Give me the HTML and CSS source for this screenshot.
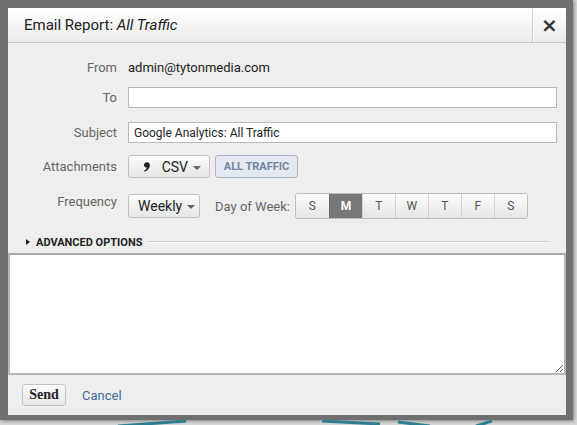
FILE: index.html
```html
<!DOCTYPE html>
<html lang="en">
<head>
    <meta charset="UTF-8">
    <meta name="viewport" content="width=device-width, initial-scale=1.0">
    <title>Email Report</title>
    <link rel="stylesheet" href="styles.css">
</head>
<body>

    <div class="dialog">
        <div class="title-bar">
            <h2 class="title">Email Report: <em>All Traffic</em></h2>
            <button class="close" type="button">&times;</button>
        </div>

        <form class="report-form">
            <div class="row row-from">
                <label>From</label>
                <span class="value">admin@tytonmedia.com</span>
            </div>
            <div class="row row-to">
                <label>To</label>
                <input type="text" class="field">
            </div>
            <div class="row row-subject">
                <label>Subject</label>
                <input type="text" class="field" value="Google Analytics: All Traffic">
            </div>
            <div class="row row-attach">
                <label>Attachments</label>
                <button type="button" class="btn btn-csv">
                    <svg class="comma" width="8" height="12" viewBox="0 0 8 12">
                        <path d="M4 1 C6.4 1 7.4 2.8 7.2 4.8 C6.9 7.6 4.6 9.8 1.6 11 L1 10 C2.8 8.9 3.8 7.8 4.1 6.6 C2.2 6.6 1 5.5 1 3.9 C1 2.2 2.3 1 4 1 Z" fill="#222"/>
                    </svg>
                    CSV <span class="caret"></span>
                </button>
                <button type="button" class="btn btn-tag">ALL TRAFFIC</button>
            </div>
            <div class="row row-freq">
                <label>Frequency</label>
                <button type="button" class="btn btn-weekly">Weekly <span class="caret"></span></button>
                <span class="dow-label">Day of Week:</span>
                <div class="days">
                    <button type="button" class="day">S</button>
                    <button type="button" class="day active">M</button>
                    <button type="button" class="day">T</button>
                    <button type="button" class="day">W</button>
                    <button type="button" class="day">T</button>
                    <button type="button" class="day">F</button>
                    <button type="button" class="day">S</button>
                </div>
            </div>
            <div class="advanced">
                <span class="arrow"></span>
                <span class="advanced-text">ADVANCED OPTIONS</span>
                <span class="rule"></span>
            </div>
            <textarea class="message"></textarea>
        </form>

        <div class="footer">
            <button type="button" class="btn btn-send">Send</button>
            <a href="#" class="cancel">Cancel</a>
        </div>
    </div>

    <svg class="chart" width="577" height="6" viewBox="0 0 577 6">
        <path d="M118 6 L186 1" stroke="#2f7f92" stroke-width="3" fill="none"/>
        <path d="M322 1 L380 4 M398 2 L430 6" stroke="#2f7f92" stroke-width="3" fill="none"/>
        <path d="M476 6 L492 1" stroke="#2f7f92" stroke-width="3" fill="none"/>
    </svg>

</body>
</html>
```

FILE: styles.css
```css
body {
    margin: 0;
    background-color: #d6d6d6;
    font-family: Roboto, "Liberation Sans", Arial, sans-serif;
    font-size: 13px;
    color: #222;
}
.dialog {
    width: 558px;
    background-color: #eeeeee;
    border-style: solid;
    border-color: #707070;
    border-width: 8px 7px 5px 8px;
    box-shadow: 1px 1px 3px rgba(0, 0, 0, 0.4);
}
.title-bar {
    display: flex;
    height: 34px;
    background: linear-gradient(#ffffff, #ececec);
    border-bottom: 1px solid #c9c9c9;
}
.title {
    flex: 1;
    margin: 0;
    padding-left: 16px;
    font-size: 15px;
    font-weight: normal;
    line-height: 34px;
    color: #222;
}
.close {
    width: 34px;
    border: none;
    border-left: 1px solid #d0d0d0;
    box-shadow: inset 1px 0 0 #fff;
    background: transparent;
    font-family: "DejaVu Sans", sans-serif;
    font-size: 20px;
    font-weight: bold;
    color: #333;
    padding: 0;
}
.report-form {
    padding-top: 14px;
}
.row {
    display: flex;
    align-items: center;
    padding-right: 9px;
}
.row label {
    width: 109px;
    margin-right: 11px;
    text-align: right;
    color: #666;
}
.row-from { height: 20px; }
.row-to { height: 21px; margin-top: 10px; }
.row-subject { height: 21px; margin-top: 14px; }
.row-attach { height: 23px; margin-top: 12px; }
.row-freq { height: 24px; margin-top: 16px; }
.row-freq label {
    align-self: flex-start;
    margin-top: 0;
}
.value {
    color: #222;
}
.field {
    flex: 1;
    height: 21px;
    box-sizing: border-box;
    border: 1px solid #b9b9b9;
    background: #fff;
    padding: 0 5px;
    font-family: Roboto, "Liberation Sans", Arial, sans-serif;
    font-size: 12px;
    color: #222;
}
.btn {
    height: 100%;
    box-sizing: border-box;
    border: 1px solid #c2c2c2;
    border-radius: 3px;
    background: linear-gradient(#fbfbfb, #e6e6e6);
    font-family: Roboto, "Liberation Sans", Arial, sans-serif;
    font-size: 13px;
    color: #222;
    padding: 0 8px;
    display: flex;
    align-items: center;
}
.btn-csv {
    width: 82px;
    padding-left: 14px;
    font-size: 14px;
}
.comma {
    margin-right: 11px;
    margin-top: 1px;
}
.caret {
    display: inline-block;
    margin-left: 5px;
    margin-top: 2px;
    border-left: 4px solid transparent;
    border-right: 4px solid transparent;
    border-top: 4px solid #666;
}
.btn-tag {
    margin-left: 5px;
    width: 83px;
    justify-content: center;
    background: #e4e8ef;
    border-color: #a9b6ca;
    color: #7185a3;
    font-size: 11px;
    font-weight: bold;
    padding: 0;
}
.btn-weekly {
    width: 72px;
    font-size: 14px;
    padding-left: 9px;
}
.dow-label {
    margin-left: 15px;
    margin-right: 5px;
    color: #666;
}
.days {
    display: flex;
    height: 100%;
    border: 1px solid #bdbdbd;
    border-radius: 3px;
    overflow: hidden;
}
.day {
    width: 33px;
    border: none;
    border-left: 1px solid #d2d2d2;
    background: linear-gradient(#fbfbfb, #e6e6e6);
    font-family: Roboto, "Liberation Sans", Arial, sans-serif;
    font-size: 12px;
    color: #555;
    padding: 0;
}
.day:first-child {
    border-left: none;
}
.day.active {
    background: #777;
    border-left-color: #666;
    color: #fff;
    font-weight: bold;
}
.advanced {
    display: flex;
    align-items: center;
    height: 14px;
    margin-top: 17px;
    padding-left: 18px;
    padding-right: 16px;
}
.arrow {
    border-top: 3px solid transparent;
    border-bottom: 3px solid transparent;
    border-left: 4px solid #222;
    margin-right: 6px;
}
.advanced-text {
    font-size: 11px;
    font-weight: bold;
    color: #222;
}
.rule {
    flex: 1;
    margin-left: 5px;
    border-top: 1px solid #cfcfcf;
    border-bottom: 1px solid #fafafa;
}
.message {
    display: block;
    width: 558px;
    height: 122px;
    box-sizing: border-box;
    margin: 4px 0 0;
    border: 2px solid #b8b8b8;
    border-top-color: #a8a8a8;
    background: #fff;
    resize: both;
}
.footer {
    height: 40px;
    box-sizing: border-box;
    padding: 9px 14px;
    display: flex;
    align-items: center;
}
.btn-send {
    height: 22px;
    width: 44px;
    justify-content: center;
    padding: 0;
    font-family: "Liberation Serif", serif;
    font-weight: bold;
    font-size: 14px;
}
.cancel {
    margin-left: 16px;
    color: #3b6b98;
    text-decoration: none;
    font-size: 13px;
}
.chart {
    display: block;
}
```
